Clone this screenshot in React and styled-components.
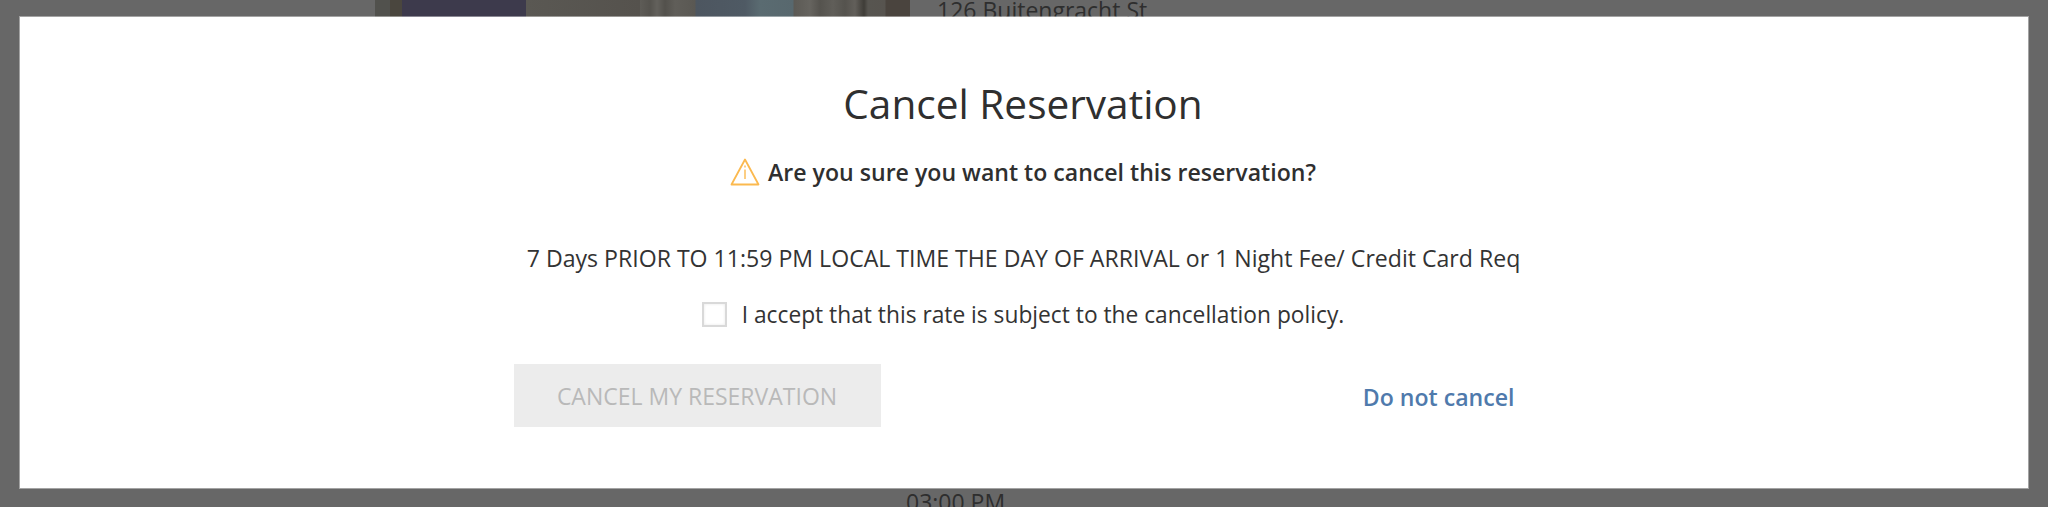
import styled, { createGlobalStyle } from 'styled-components';

const GlobalStyle = createGlobalStyle`
  html, body {
    margin: 0;
    padding: 0;
    background: #676767;
    font-family: 'Open Sans', 'Liberation Sans', sans-serif;
  }
`;

const Page = styled.div`
  position: relative;
  display: flex;
  flex-direction: column;
  justify-content: space-between;
  width: 2048px;
  height: 507px;
  overflow: hidden;
  background: #676767;
  color: #333;
`;

const HotelRow = styled.div`
  display: flex;
  gap: 27px;
  padding-left: 375px;
  height: 24px;
`;

const HotelPhoto = styled.div`
  width: 535px;
  height: 100%;
  background: linear-gradient(
    90deg,
    #51514d 0, #51514d 15px,
    #4a463e 15px, #4a463e 27px,
    #3d3a4c 27px, #3d3a4c 151px,
    #5a5853 151px, #55524d 265px,
    #5e5c57 265px, #55534e 275px, #63615c 282px, #53514c 290px, #605e59 300px, #5a5853 320px,
    #4d5660 321px, #4f5a64 370px,
    #5a6b71 385px, #58686e 418px,
    #5c5a55 419px, #66645f 435px, #55534e 445px, #605e59 458px, #55534e 470px, #625f5a 480px,
    #3f3d38 489px, #575550 493px,
    #57544f 510px, #4a443e 511px, #4a443e 535px
  );
`;

const Address = styled.div`
  font-size: 23px;
  line-height: 24px;
  margin-top: -2px;
  white-space: nowrap;
  color: #2e2e2e;
`;

const CheckIn = styled.div`
  padding-left: 906px;
  height: 20px;
  font-size: 23px;
  line-height: 31px;
  color: #2e2e2e;
`;

const Modal = styled.section`
  position: absolute;
  top: 17px;
  left: 20px;
  width: 2008px;
  height: 471px;
  display: flex;
  flex-direction: column;
  align-items: center;
  background: #fff;
  box-shadow: 0 0 0 1px rgba(255, 255, 255, 0.4);
`;

const Title = styled.h2`
  margin: 60px 2px 0 0;
  font-size: 40.6px;
  line-height: 54px;
  font-weight: 400;
  color: #2f2f2f;
`;

const Warning = styled.p`
  display: flex;
  align-items: center;
  gap: 8px;
  margin: 26px 2px 0 0;
  height: 30px;
  font-size: 23.1px;
  font-weight: 600;
  color: #2f2f2f;
`;

const Policy = styled.p`
  margin: 56px 1px 0 0;
  font-size: 23.1px;
  line-height: 31px;
  color: #333;
`;

const AcceptRow = styled.label`
  display: flex;
  align-items: center;
  gap: 15px;
  margin: 25px 2px 0 0;
  height: 31px;
  font-size: 22.75px;
  color: #333;
`;

const CheckBox = styled.span`
  box-sizing: border-box;
  width: 25px;
  height: 25px;
  background: #fff;
  border: 2px solid #d9d9d9;
  box-shadow: inset 0 0 3px #e8e8e8;
`;

const Actions = styled.div`
  display: flex;
  justify-content: space-between;
  align-items: center;
  width: 1001px;
  margin: 34px 20px 0 0;
`;

const CancelButton = styled.button`
  width: 367px;
  height: 63px;
  padding: 0;
  border: 0;
  background: #ececec;
  color: #b9b9b9;
  font-family: inherit;
  font-size: 23px;
`;

const KeepLink = styled.a`
  margin-top: 2px;
  font-size: 23.1px;
  font-weight: 600;
  color: #4f7aac;
`;

function WarningIcon() {
  return (
    <svg width='30' height='28' viewBox='0 0 30 28' fill='none' stroke='#fbb94f' strokeWidth='1.8'>
      <path d='M15 1.5 L28.5 26.5 L1.5 26.5 Z' strokeLinejoin='round' />
      <path d='M15 11.5 L15 21' strokeWidth='1.4' />
      <path d='M15 7.6 L15 9.4' strokeWidth='1.4' />
    </svg>
  );
}

export default function App() {
  return (
    <>
      <GlobalStyle />
      <Page>
        <HotelRow>
          <HotelPhoto />
          <Address>126 Buitengracht St</Address>
        </HotelRow>
        <CheckIn>03:00 PM</CheckIn>
        <Modal>
          <Title>Cancel Reservation</Title>
          <Warning>
            <WarningIcon />
            Are you sure you want to cancel this reservation?
          </Warning>
          <Policy>7 Days PRIOR TO 11:59 PM LOCAL TIME THE DAY OF ARRIVAL or 1 Night Fee/ Credit Card Req</Policy>
          <AcceptRow>
            <CheckBox />
            I accept that this rate is subject to the cancellation policy.
          </AcceptRow>
          <Actions>
            <CancelButton disabled>CANCEL MY RESERVATION</CancelButton>
            <KeepLink>Do not cancel</KeepLink>
          </Actions>
        </Modal>
      </Page>
    </>
  );
}
